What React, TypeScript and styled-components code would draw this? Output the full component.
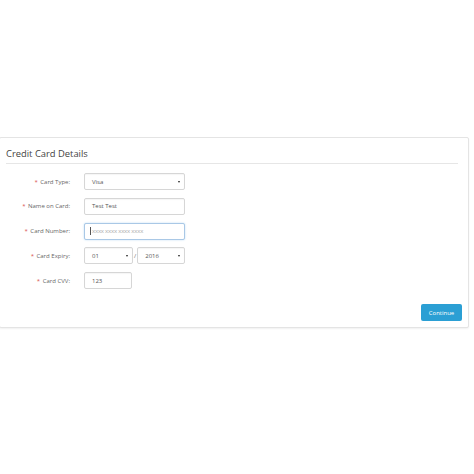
import React from 'react'
import styled, { createGlobalStyle } from 'styled-components'

const GlobalStyle = createGlobalStyle`
  html, body {
    margin: 0;
    padding: 0;
    background: #ffffff;
    font-family: 'Open Sans', 'Liberation Sans', sans-serif;
  }
`

const Page = styled.div`
  width: 474px;
  height: 474px;
  padding-top: 137px;
  box-sizing: border-box;
  overflow: hidden;
`

const Panel = styled.div`
  margin-left: -1px;
  width: 470px;
  height: 191px;
  box-sizing: border-box;
  border: 1px solid #e4e4e4;
  border-radius: 2px;
  box-shadow: 0 1px 2px rgba(0, 0, 0, 0.06);
  background: #fff;
  display: flex;
  flex-direction: column;
`

const Heading = styled.h3`
  margin: 9px 10px 0 6px;
  padding-bottom: 3px;
  border-bottom: 1px solid #e6e6e6;
  font-size: 9.4px;
  font-weight: 400;
  line-height: 13px;
  color: #444;
`

const Form = styled.div`
  display: flex;
  flex-direction: column;
  gap: 7.75px;
  margin-top: 9px;
`

const Row = styled.div`
  display: grid;
  grid-template-columns: 70px auto;
  column-gap: 14px;
  align-items: center;
  height: 17px;
`

const Label = styled.label`
  text-align: right;
  font-size: 6px;
  color: #666;
  white-space: nowrap;
`

const Star = styled.span`
  color: #d9534f;
  margin-right: 1px;
`

const Field = styled.div<{ $w: number; $focus?: boolean }>`
  width: ${(p) => p.$w}px;
  height: 17px;
  box-sizing: border-box;
  border: 1px solid ${(p) => (p.$focus ? '#a9c8e6' : '#d6d6d6')};
  border-radius: 2px;
  box-shadow: ${(p) => (p.$focus ? '0 0 2px rgba(102,175,233,0.45)' : 'inset 0 1px 1px rgba(0,0,0,0.04)')};
  display: flex;
  align-items: center;
  justify-content: space-between;
  padding: 0 4px 0 7px;
  font-size: 6px;
  color: #555;
  background: #fff;
`

const Placeholder = styled.span`
  color: #aaa;
  border-left: 1px solid #555;
  padding-left: 1px;
  margin-left: -2px;
  letter-spacing: -0.2px;
`

const Caret = styled.span`
  width: 0;
  height: 0;
  border-left: 1.5px solid transparent;
  border-right: 1.5px solid transparent;
  border-top: 2.5px solid #222;
`

const Pair = styled.div`
  display: flex;
  align-items: center;
  gap: 1px;
`

const Slash = styled.span`
  font-size: 6px;
  color: #777;
`

const Footer = styled.div`
  margin-top: auto;
  display: flex;
  justify-content: flex-end;
  padding: 0 6px 6px 0;
`

const Button = styled.button`
  width: 41px;
  height: 17px;
  border: none;
  border-radius: 2px;
  background: #2b9fd4;
  color: #fff;
  font-family: inherit;
  font-size: 6px;
  padding: 0;
`

const Select = ({ w, value }: { w: number; value: string }) => (
  <Field $w={w}>
    <span>{value}</span>
    <Caret />
  </Field>
)

export default function App() {
  return (
    <Page>
      <GlobalStyle />
      <Panel>
        <Heading>Credit Card Details</Heading>
        <Form>
          <Row>
            <Label><Star>*</Star> Card Type:</Label>
            <Select w={101} value="Visa" />
          </Row>
          <Row>
            <Label><Star>*</Star> Name on Card:</Label>
            <Field $w={101}>Test Test</Field>
          </Row>
          <Row>
            <Label><Star>*</Star> Card Number:</Label>
            <Field $w={101} $focus>
              <Placeholder>xxxx xxxx xxxx xxxx</Placeholder>
            </Field>
          </Row>
          <Row>
            <Label><Star>*</Star> Card Expiry:</Label>
            <Pair>
              <Select w={49} value="01" />
              <Slash>/</Slash>
              <Select w={48} value="2016" />
            </Pair>
          </Row>
          <Row>
            <Label><Star>*</Star> Card CVV:</Label>
            <Field $w={48}>123</Field>
          </Row>
        </Form>
        <Footer>
          <Button>Continue</Button>
        </Footer>
      </Panel>
    </Page>
  )
}
